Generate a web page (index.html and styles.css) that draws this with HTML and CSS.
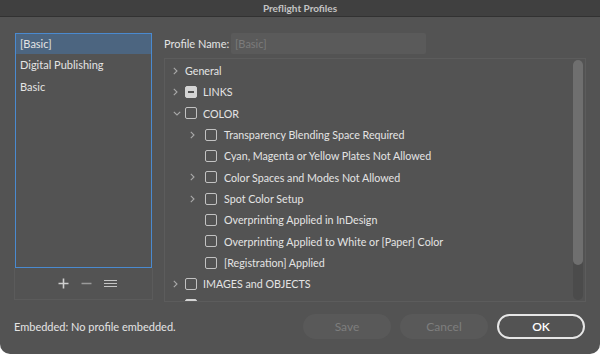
FILE: index.html
```html
<!DOCTYPE html>
<html lang="en">
	<head>
		<meta charset="UTF-8">
		<title>Preflight Profiles</title>
		<link rel="stylesheet" href="styles.css">
	</head>
	<body>
		<div class="dialog">
			<div class="titlebar">Preflight Profiles</div>

			<main class="content">
				<div class="profiles">
					<ul class="profile-list">
						<li class="selected">[Basic]</li>
						<li>Digital Publishing</li>
						<li>Basic</li>
					</ul>
					<div class="list-tools">
						<svg width="11" height="11" viewBox="0 0 11 11"><path d="M5.5 0.5v10M0.5 5.5h10" stroke="#cfcfcf" stroke-width="1.6"/></svg>
						<svg width="11" height="11" viewBox="0 0 11 11"><path d="M0.5 5.5h10" stroke="#9a9a9a" stroke-width="1.4"/></svg>
						<svg width="13" height="11" viewBox="0 0 13 11"><path d="M0 2.5h13M0 5.5h13M0 8.5h13" stroke="#c4c4c4" stroke-width="1.1"/></svg>
					</div>
				</div>

				<div class="details">
					<div class="name-row">
						<label for="profile-name">Profile Name:</label>
						<input id="profile-name" class="name-input" type="text" placeholder="[Basic]" disabled>
					</div>

					<div class="tree">
						<ul class="rows">
							<li class="row lv0"><span class="twist"><svg width="5" height="8" viewBox="0 0 5 8"><path d="M0.8 0.8l3.2 3.2-3.2 3.2"/></svg></span><span class="label">General</span></li>
							<li class="row lv0"><span class="twist"><svg width="5" height="8" viewBox="0 0 5 8"><path d="M0.8 0.8l3.2 3.2-3.2 3.2"/></svg></span><span class="check mixed"></span><span class="label">LINKS</span></li>
							<li class="row lv0"><span class="twist"><svg width="8" height="5" viewBox="0 0 8 5"><path d="M0.8 0.8l3.2 3.2 3.2-3.2"/></svg></span><span class="check"></span><span class="label">COLOR</span></li>
							<li class="row lv1"><span class="twist"><svg width="5" height="8" viewBox="0 0 5 8"><path d="M0.8 0.8l3.2 3.2-3.2 3.2"/></svg></span><span class="check"></span><span class="label">Transparency Blending Space Required</span></li>
							<li class="row lv1"><span class="twist"></span><span class="check"></span><span class="label">Cyan, Magenta or Yellow Plates Not Allowed</span></li>
							<li class="row lv1"><span class="twist"><svg width="5" height="8" viewBox="0 0 5 8"><path d="M0.8 0.8l3.2 3.2-3.2 3.2"/></svg></span><span class="check"></span><span class="label">Color Spaces and Modes Not Allowed</span></li>
							<li class="row lv1"><span class="twist"><svg width="5" height="8" viewBox="0 0 5 8"><path d="M0.8 0.8l3.2 3.2-3.2 3.2"/></svg></span><span class="check"></span><span class="label">Spot Color Setup</span></li>
							<li class="row lv1"><span class="twist"></span><span class="check"></span><span class="label">Overprinting Applied in InDesign</span></li>
							<li class="row lv1"><span class="twist"></span><span class="check"></span><span class="label">Overprinting Applied to White or [Paper] Color</span></li>
							<li class="row lv1"><span class="twist"></span><span class="check"></span><span class="label">[Registration] Applied</span></li>
							<li class="row lv0"><span class="twist"><svg width="5" height="8" viewBox="0 0 5 8"><path d="M0.8 0.8l3.2 3.2-3.2 3.2"/></svg></span><span class="check"></span><span class="label">IMAGES and OBJECTS</span></li>
							<li class="row lv0"><span class="twist"><svg width="5" height="8" viewBox="0 0 5 8"><path d="M0.8 0.8l3.2 3.2-3.2 3.2"/></svg></span><span class="check mixed"></span><span class="label">TEXT</span></li>
						</ul>
						<div class="scrollbar"><div class="thumb"></div></div>
					</div>
				</div>
			</main>

			<footer class="footer">
				<span class="embedded">Embedded: No profile embedded.</span>
				<div class="buttons">
					<button class="button" disabled>Save</button>
					<button class="button" disabled>Cancel</button>
					<button class="button primary">OK</button>
				</div>
			</footer>
		</div>
	</body>
</html>
```

FILE: styles.css
```css
html, body {
	margin: 0;
	padding: 0;
	background-color: #ffffff;
	font-family: Lato, "Open Sans", sans-serif;
	font-size: 11px;
	color: #e4e4e4;
}

ul {
	list-style: none;
	margin: 0;
	padding: 0;
}

.dialog {
	width: 600px;
	height: 354px;
	background-color: #535353;
	border-radius: 0 0 10px 10px;
	overflow: hidden;
	display: flex;
	flex-direction: column;
}

.titlebar {
	height: 16px;
	line-height: 16px;
	background-color: #404040;
	border-bottom: 1px solid #323232;
	text-align: center;
	font-size: 10px;
	font-weight: bold;
	color: #c4c4c4;
}

.content {
	display: grid;
	grid-template-columns: 139px 1fr;
	column-gap: 11px;
	padding: 16px 14px 0 14px;
}

/* left column */

.profiles {
	display: flex;
	flex-direction: column;
}

.profile-list {
	height: 235px;
	box-sizing: border-box;
	margin: 0 1px;
	border: 1px solid #4a8ad0;
}

.profile-list li {
	height: 21.5px;
	line-height: 21px;
	padding-left: 4px;
}

.profile-list li.selected {
	height: 20px;
	line-height: 20px;
	background-color: #4c6580;
}

.list-tools {
	height: 32px;
	box-sizing: border-box;
	border: 1px solid #5b5b5b;
	border-top: none;
	display: flex;
	justify-content: center;
	align-items: center;
	gap: 12px;
	padding-left: 8px;
}

/* right column */

.details {
	display: flex;
	flex-direction: column;
}

.name-row {
	height: 21px;
	display: flex;
	align-items: center;
	margin-bottom: 4px;
}

.name-row label {
	width: 67px;
}

.name-input {
	all: unset;
	width: 195px;
	height: 21px;
	box-sizing: border-box;
	padding: 0 4px;
	background-color: #5a5a5a;
	border-radius: 2px;
	font-size: 11px;
}

.name-input::placeholder {
	color: #7c7c7c;
}

.tree {
	height: 244px;
	box-sizing: border-box;
	border: 1px solid #5c5c5c;
	display: flex;
	overflow: hidden;
}

.rows {
	flex: 1;
	padding-top: 1px;
	overflow: hidden;
	font-size: 10.7px;
}

.row {
	height: 21.33px;
	display: flex;
	align-items: center;
}

.row.lv0 {
	padding-left: 8px;
}

.row.lv1 {
	padding-left: 25px;
}

.twist {
	width: 12px;
	display: flex;
	align-items: center;
}

.row.lv1 .twist {
	width: 15px;
}

.twist svg path {
	fill: none;
	stroke: #a9a9a9;
	stroke-width: 1.1;
}

.check {
	width: 12px;
	height: 12px;
	box-sizing: border-box;
	border: 1px solid #c2c2c2;
	border-radius: 2px;
	margin-right: 6px;
	display: flex;
	align-items: center;
	justify-content: center;
}

.row.lv1 .check {
	margin-right: 7px;
}

.check.mixed {
	background-color: #d4d4d4;
	border-color: #d4d4d4;
}

.check.mixed::after {
	content: "";
	width: 6px;
	height: 2px;
	background-color: #505050;
}

.scrollbar {
	width: 10px;
	margin: 1px 2px 1px 0;
	background-color: #4b4b4b;
	border-radius: 5px;
}

.thumb {
	height: 205px;
	background-color: #6f6f6f;
	border-radius: 5px;
}

/* footer */

.footer {
	display: flex;
	justify-content: space-between;
	align-items: center;
	padding: 12px 15px 0 14px;
}

.buttons {
	display: flex;
	gap: 9px;
}

.button {
	all: unset;
	width: 88px;
	height: 25px;
	box-sizing: border-box;
	border-radius: 13px;
	background-color: #595959;
	color: #7e7e7e;
	text-align: center;
	font-size: 12px;
	line-height: 25px;
}

.button.primary {
	background-color: transparent;
	border: 2px solid #e6e6e6;
	line-height: 21px;
	color: #ffffff;
	font-weight: 600;
	cursor: pointer;
}
```
